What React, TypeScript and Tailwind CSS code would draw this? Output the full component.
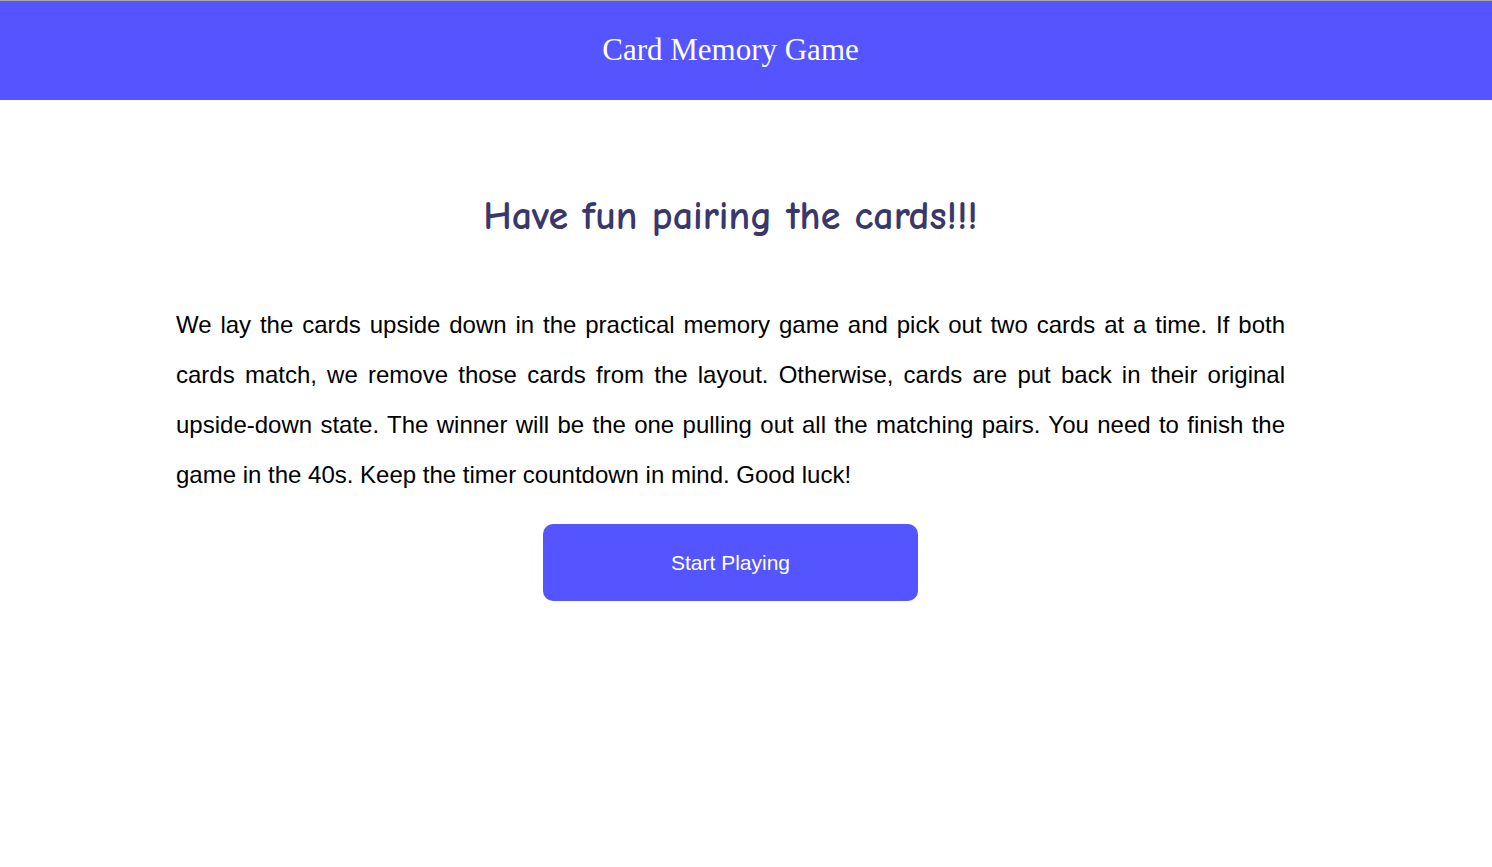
export default function App() {
  return (
    <div className="min-h-screen bg-white border-t border-[#a9a9a9]">
      <header className="h-[99px] bg-[#5555ff] flex items-center justify-center pr-[31px]">
        <h1 className="text-white text-[31px] font-['Liberation_Serif',serif]">Card Memory Game</h1>
      </header>
      <main className="w-[1461px] flex flex-col items-center">
        <h2 className="mt-[88px] text-[40px] leading-[56px] font-bold text-[#3a386b] font-['Comic_Sans_MS','Comic_Neue',cursive]">
          Have fun pairing the cards!!!
        </h2>
        <p className="mt-[56px] w-[1109px] text-justify text-[24px] leading-[50px] text-black font-['Liberation_Sans',Arial,sans-serif]">
          We lay the cards upside down in the practical memory game and pick out two cards at a time. If both cards
          match, we remove those cards from the layout. Otherwise, cards are put back in their original upside-down
          state. The winner will be the one pulling out all the matching pairs. You need to finish the game in the
          40s. Keep the timer countdown in mind. Good luck!
        </p>
        <button className="mt-[24px] w-[375px] h-[77px] rounded-[10px] bg-[#5555ff] text-white text-[21px] font-['Liberation_Sans',Arial,sans-serif]">
          Start Playing
        </button>
      </main>
    </div>
  )
}
